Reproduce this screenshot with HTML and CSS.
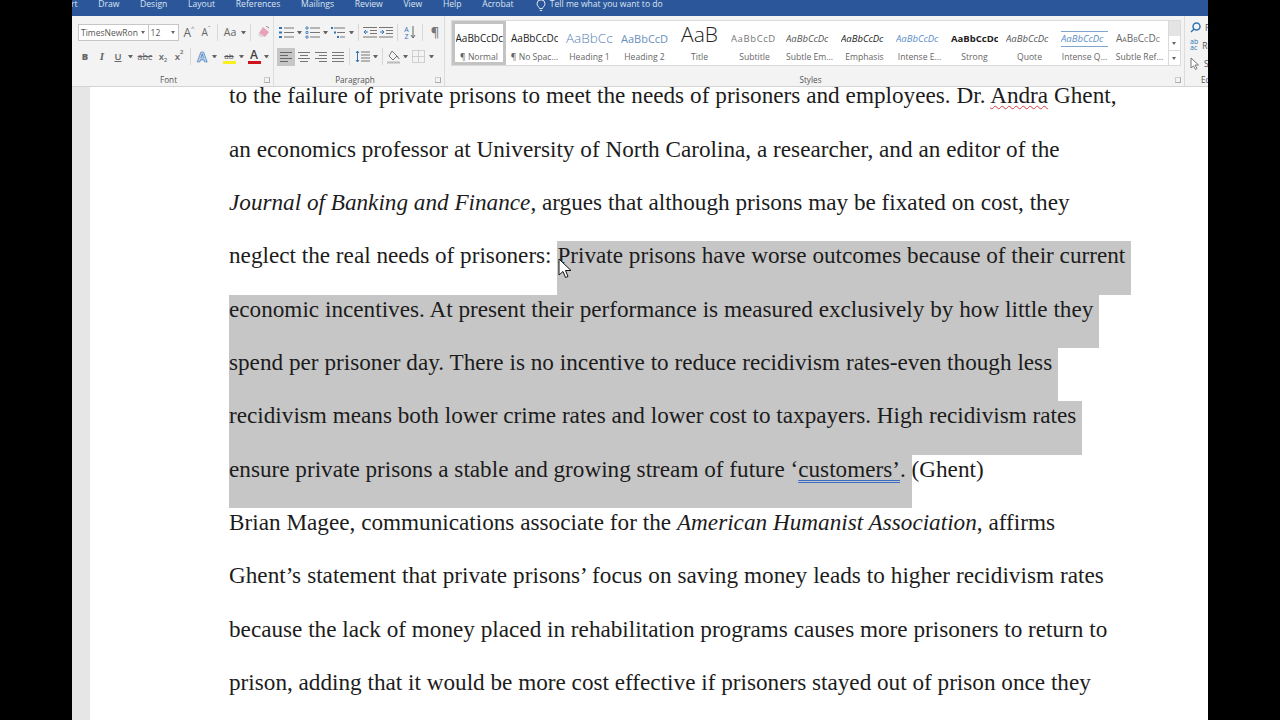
FILE: index.html
```html
<!DOCTYPE html>
<html lang="en">
<head>
<meta charset="utf-8">
<title>Document - Word</title>
<link rel="stylesheet" href="styles.css">
</head>
<body>
<div class="app">
  <nav class="tabs">
    <span class="tab-cut">rt</span><span>Draw</span><span>Design</span><span>Layout</span><span>References</span><span>Mailings</span><span>Review</span><span>View</span><span>Help</span><span>Acrobat</span>
    <span class="tell">
      <svg width="10" height="12" viewBox="0 0 10 12" fill="none" stroke="#dfe7f3" stroke-width="1"><path d="M3.5 8.5C3 6.5 1 6 1 3.8a4 4 0 0 1 8 0C9 6 7 6.5 6.500 8.500zM3.800 10.500h2.400"/></svg>
      Tell me what you want to do
    </span>
  </nav>

  <section class="ribbon">
    <div class="group g-font">
      <div class="row">
        <div class="combo c-name">TimesNewRon<i class="caret"></i></div>
        <div class="combo c-size">12<i class="caret"></i></div>
        <span class="ic w16 m2 glyph big">A<sup>^</sup></span>
        <span class="ic w16 m1 glyph mid">A<sup>ˇ</sup></span>
        <b class="sep"></b>
        <span class="ic w18 glyph aa">Aa</span><i class="caret solo"></i>
        <b class="sep"></b>
        <span class="ic w18 m1"><svg width="15" height="13" viewBox="0 0 15 13"><path d="M6 1l6 5-4 5-6-4z" fill="#e9a0b8"/><path d="M2 7l5 4H3.500L1 8.500z" fill="#d8d8d8"/><path d="M9 0l3 2" stroke="#888" fill="none"/></svg></span>
      </div>
      <div class="row r2">
        <span class="ic w14 glyph fmt bold">B</span>
        <span class="ic w16 m2 glyph fmt ital">I</span>
        <span class="ic w16 glyph fmt under">U</span><i class="caret solo"></i>
        <span class="ic w18 m2 glyph fmt strike">abc</span>
        <span class="ic w16 m1 glyph fmt">x<sub>2</sub></span>
        <span class="ic w16 glyph fmt">x<sup>2</sup></span>
        <b class="sep"></b>
        <span class="ic w16 glyph effect">A</span><i class="caret solo"></i>
        <span class="ic w16 m3 stack"><span class="hl-t">ab</span><em class="bar yellow"></em></span><i class="caret solo"></i>
        <span class="ic w16 m1 stack"><span class="red-t">A</span><em class="bar red"></em></span><i class="caret solo"></i>
      </div>
      <div class="glabel">Font<i class="launcher"></i></div>
    </div>

    <div class="group g-para">
      <div class="row">
        <span class="ic w18"><svg width="15" height="13" viewBox="0 0 15 13" stroke="#777"><path d="M5 2h10M5 6.500h10M5 11h10"/><path d="M0 2h3M0 6.500h3M0 11h3" stroke="#2f75b5" stroke-width="2"/></svg></span><i class="caret solo"></i>
        <span class="ic w18"><svg width="15" height="13" viewBox="0 0 15 13" stroke="#777"><path d="M5 2h10M5 6.500h10M5 11h10"/><path d="M1 1h2v2H1zM1 5.500h2v2H1zM1 10h2v2H1z" stroke="#2f75b5" stroke-width=".8" fill="none"/></svg></span><i class="caret solo"></i>
        <span class="ic w18"><svg width="15" height="13" viewBox="0 0 15 13" stroke="#777"><path d="M3 2h11M6 6.500h8M9 11h5"/><path d="M0 2h2M3 6.500h2M6 11h2" stroke="#2f75b5" stroke-width="2"/></svg></span><i class="caret solo"></i>
        <b class="sep"></b>
        <span class="ic w16"><svg width="14" height="11" viewBox="0 0 14 11" stroke="#777"><path d="M0 .5h14M7 3.500h7M7 6.500h7M0 10h14"/><path d="M5 5H1m2-2L1 5l2 2" stroke="#2f75b5" fill="none"/></svg></span>
        <span class="ic w16"><svg width="14" height="11" viewBox="0 0 14 11" stroke="#777"><path d="M0 .5h14M7 3.500h7M7 6.500h7M0 10h14"/><path d="M1 5h4M3 3l2 2-2 2" stroke="#2f75b5" fill="none"/></svg></span>
        <b class="sep"></b>
        <span class="ic w18 sort"><span class="sort-t">A<br>Z</span><svg width="6" height="13" viewBox="0 0 6 13" fill="none" stroke="#666"><path d="M3 0v12M1 9l2 3 2-3"/></svg></span>
        <b class="sep"></b>
        <span class="ic w18 glyph pil">¶</span>
      </div>
      <div class="row r2">
        <span class="ic w18 on"><svg width="12" height="10" viewBox="0 0 12 10" stroke="#666"><path d="M0 .5h12M0 3.500h8M0 6.500h12M0 9.500h8"/></svg></span>
        <span class="ic w17"><svg width="12" height="10" viewBox="0 0 12 10" stroke="#777"><path d="M0 .5h12M2 3.500h8M0 6.500h12M2 9.500h8"/></svg></span>
        <span class="ic w17"><svg width="12" height="10" viewBox="0 0 12 10" stroke="#777"><path d="M0 .5h12M4 3.500h8M0 6.500h12M4 9.500h8"/></svg></span>
        <span class="ic w17"><svg width="12" height="10" viewBox="0 0 12 10" stroke="#777"><path d="M0 .5h12M0 3.500h12M0 6.500h12M0 9.500h12"/></svg></span>
        <b class="sep"></b>
        <span class="ic w18"><svg width="15" height="13" viewBox="0 0 15 13" stroke="#777" fill="none"><path d="M6 2h9M6 5h9M6 8h9M6 11h9"/><path d="M2.500 1v11M1 3l1.500-2L4 3M1 10l1.500 2L4 10" stroke="#2f75b5"/></svg></span><i class="caret solo"></i>
        <b class="sep"></b>
        <span class="ic w15"><svg width="15" height="14" viewBox="0 0 15 14" fill="none" stroke="#777"><path d="M6 1l5 5-4 4-4-4z"/><path d="M11 6c1 2 2 2 2 3" stroke="#555"/><path d="M1 12.500h13" stroke="#bbb" stroke-width="2"/></svg></span><i class="caret solo"></i>
        <span class="ic w18"><svg width="13" height="13" viewBox="0 0 13 13" fill="none" stroke="#aaa" stroke-dasharray="1 1"><path d="M.5.500h12v12H.5zM6.500.500v12M.5 6.500h12"/></svg></span><i class="caret solo"></i>
      </div>
      <div class="glabel">Paragraph<i class="launcher"></i></div>
    </div>

    <div class="group g-styles">
      <div class="gallery">
        <div class="style selected"><span class="sample s-normal">AaBbCcDc</span><span class="sname">¶ Normal</span></div>
        <div class="style"><span class="sample s-normal">AaBbCcDc</span><span class="sname">¶ No Spac...</span></div>
        <div class="style"><span class="sample s-h1">AaBbCc</span><span class="sname">Heading 1</span></div>
        <div class="style"><span class="sample s-h2">AaBbCcD</span><span class="sname">Heading 2</span></div>
        <div class="style"><span class="sample s-title">AaB</span><span class="sname">Title</span></div>
        <div class="style"><span class="sample s-sub">AaBbCcD</span><span class="sname">Subtitle</span></div>
        <div class="style"><span class="sample s-em">AaBbCcDc</span><span class="sname">Subtle Em...</span></div>
        <div class="style"><span class="sample s-em dark">AaBbCcDc</span><span class="sname">Emphasis</span></div>
        <div class="style"><span class="sample s-em blue">AaBbCcDc</span><span class="sname">Intense E...</span></div>
        <div class="style"><span class="sample s-strong">AaBbCcDc</span><span class="sname">Strong</span></div>
        <div class="style"><span class="sample s-em">AaBbCcDc</span><span class="sname">Quote</span></div>
        <div class="style"><span class="sample s-em blue ruled">AaBbCcDc</span><span class="sname">Intense Q...</span></div>
        <div class="style"><span class="sample s-ref">AaBbCcDc</span><span class="sname">Subtle Ref...</span></div>
        <div class="scroller"><i class="sc up"></i><i class="sc mid"></i><i class="sc low"></i></div>
      </div>
      <div class="glabel">Styles<i class="launcher"></i></div>
    </div>

    <div class="group g-edit">
      <div class="edit-row"><svg width="11" height="11" viewBox="0 0 11 11" fill="none" stroke="#2f75b5" stroke-width="1.500"><circle cx="6.500" cy="4.500" r="3.500"/><path d="M4 7L1 10"/></svg><span>Find</span></div>
      <div class="edit-row"><span class="abc">ab<br>ac</span><span>Replace</span></div>
      <div class="edit-row"><svg width="10" height="13" viewBox="0 0 10 13" fill="#fff" stroke="#777"><path d="M1 1v10l2.500-2 2 3.500 1.500-1-2-3.500h3.500z"/></svg><span>Select</span></div>
      <div class="glabel left">Editing</div>
    </div>
  </section>

  <main class="doc">
    <article class="page">
      <div class="text">
        <p class="line ws-m">to the failure of private prisons to meet the needs of prisoners and employees. Dr. <span class="spell">Andra</span> Ghent,</p>
        <p class="line ws-s">an economics professor at University of North Carolina, a researcher, and an editor of the</p>
        <p class="line"><em>Journal of Banking and Finance</em>, argues that although prisons may be fixated on cost, they</p>
        <p class="line">neglect the real needs of prisoners: <span class="sel">Private prisons have worse outcomes because of their current </span></p>
        <p class="line ws-s"><span class="sel">economic incentives. At present their performance is measured exclusively by how little they </span></p>
        <p class="line ws-s"><span class="sel">spend per prisoner day. There is no incentive to reduce recidivism rates-even though less </span></p>
        <p class="line"><span class="sel">recidivism means both lower crime rates and lower cost to taxpayers. High recidivism rates </span></p>
        <p class="line"><span class="sel">ensure private prisons a stable and growing stream of future ‘<span class="gram">customers’</span>. </span>(Ghent)</p>
        <p class="line ws-s">Brian Magee, communications associate for the <em>American Humanist Association</em>, affirms</p>
        <p class="line ws-l">Ghent’s statement that private prisons’ focus on saving money leads to higher recidivism rates</p>
        <p class="line">because the lack of money placed in rehabilitation programs causes more prisoners to return to</p>
        <p class="line">prison, adding that it would be more cost effective if prisoners stayed out of prison once they</p>
      </div>
      <svg class="pointer" width="14" height="22" viewBox="0 0 14 22"><path d="M1 1v16l4-3.500 2.500 6 2.500-1-2.500-6H13z" fill="#fff" stroke="#111"/></svg>
    </article>
  </main>
</div>
</body>
</html>
```
FILE: styles.css
```css
* { box-sizing: border-box; }
html, body { margin: 0; height: 100%; background: #000; overflow: hidden; }
body { padding: 0 72px; font-family: "Open Sans", "Noto Sans", sans-serif; }
.app { width: 1136px; height: 720px; display: flex; flex-direction: column; overflow: hidden; background: #fff; }

.tabs { height: 16px; flex: none; background: #2b579a; color: #dbe4f1; font-size: 8.600px; line-height: 9px; display: flex; gap: 20.700px; align-items: flex-start; white-space: nowrap; overflow: hidden; }
.tab-cut { width: 5.500px; overflow: hidden; direction: rtl; }
.tell { display: flex; gap: 4px; margin-left: 1.500px; align-items: flex-start; }
.tell svg { flex: none; }

.ribbon { height: 71px; flex: none; background: #f3f3f3; border-bottom: 1px solid #d4d4d4; display: flex; color: #666; overflow: hidden; }
.group { position: relative; flex: none; border-right: 1px solid #dcdcdc; padding-top: 8px; }
.g-font { width: 202px; padding-left: 6px; }
.g-para { width: 171px; padding-left: 3px; }
.g-styles { width: 740px; padding: 4px 0 0 6px; }
.g-edit { width: 23px; border: 0; padding: 2px 0 0 5px; }

.row { display: flex; align-items: center; height: 17px; }
.r2 { margin-top: 7px; }
.glabel { position: absolute; left: 0; right: 0; bottom: 0; height: 12px; padding-right: 8px; font-size: 8.200px; line-height: 11px; text-align: center; color: #555; white-space: nowrap; }
.left { text-align: left; padding-left: 16px; padding-right: 0; }
.launcher { position: absolute; right: 3px; top: 3px; width: 6px; height: 6px; border: 1px solid #aaa; border-top-color: #ccc; border-left-color: #ccc; }

.combo { height: 17px; background: #fff; border: 1px solid #c6c6c6; font-size: 8.500px; line-height: 15px; padding-left: 2px; color: #555; position: relative; white-space: nowrap; overflow: hidden; }
.c-name { width: 72px; }
.c-size { width: 32px; margin-left: -1px; }
.caret { display: block; width: 0; height: 0; border: 2.500px solid transparent; border-top: 3px solid #666; border-bottom: 0; }
.combo .caret { position: absolute; right: 3px; top: 6px; }
.caret.solo { flex: none; width: 5px; margin: 0 1.500px; }

.ic { display: flex; align-items: center; justify-content: center; flex: none; height: 17px; white-space: nowrap; }
.w14 { width: 14px; } .w15 { width: 15px; } .w16 { width: 16px; } .w17 { width: 17px; } .w18 { width: 18px; }
.m1 { margin-left: 1px; } .m2 { margin-left: 2px; } .m3 { margin-left: 3px; }
.sep { flex: none; width: 1px; height: 17px; background: #d8d8d8; margin: 0 3px; }

.glyph { color: #666; font-size: 10px; line-height: 17px; }
.glyph sup { font-size: 6px; line-height: 6px; align-self: flex-start; margin-top: 1px; }
.glyph sub { font-size: 5.500px; line-height: 6px; align-self: flex-end; margin-bottom: 2px; }
.big { font-size: 12px; } .mid { font-size: 10px; }
.aa { font-size: 10.500px; }
.fmt { font-weight: 600; font-size: 9.500px; }
.bold { font-weight: 800; }
.ital { font-style: italic; font-family: "Liberation Serif", serif; font-size: 11px; }
.under { text-decoration: underline; }
.strike { text-decoration: line-through; font-weight: 400; font-size: 9px; }
.effect { font-size: 14px; font-weight: 700; color: #cfe0f3; -webkit-text-stroke: .7px #2f75b5; }
.pil { font-size: 13px; font-weight: 600; color: #777; }
.stack { flex-direction: column; line-height: 9px; }
.hl-t { font-size: 8px; color: #555; text-decoration: line-through; line-height: 11px; }
.red-t { font-size: 12px; font-weight: 600; color: #444; line-height: 12px; }
.bar { display: block; width: 13px; height: 3px; flex: none; }
.yellow { background: #f7f01d; } .red { background: #d0121b; }
.sort { gap: 1px; }
.sort-t { font-size: 7px; line-height: 7px; color: #2f75b5; text-align: center; }
.on { background: #c6c6c6; height: 18px; }

.gallery { width: 730px; height: 46px; background: #fff; border: 1px solid #dadada; display: flex; }
.style { flex: none; width: 55px; height: 44px; display: flex; flex-direction: column; align-items: center; overflow: hidden; padding-top: 6px; }
.selected { border: 3px solid #c3c3c3; padding-top: 0; width: 54px; margin-right: 1px; }
.sample { height: 23px; line-height: 23px; width: 47px; flex: none; overflow: hidden; white-space: nowrap; text-align: center; color: #222; font-size: 10px; display: block; }
.sname { font-size: 8.600px; line-height: 12px; margin-top: 1px; color: #666; white-space: nowrap; }
.selected .sample { line-height: 28px; }
.selected .sname { margin-top: 4px; }
.s-normal { font-weight: 500; }
.s-h1 { font-size: 13.500px; color: #5b83b5; font-weight: 300; text-align: left; }
.s-h2 { font-size: 11px; color: #6a8fbd; text-align: left; }
.s-title { font-size: 21px; font-weight: 300; color: #222; line-height: 15px; }
.s-sub { font-size: 9.500px; letter-spacing: .6px; color: #777; text-align: left; }
.s-em { font-style: italic; font-size: 9.500px; color: #555; text-align: left; }
.dark { color: #222; }
.blue { color: #5b8fc8; }
.ruled { border-top: 1px solid #7fa6d0; border-bottom: 1px solid #7fa6d0; height: 16px; line-height: 14px; margin: 4px 0 3px; }
.s-strong { font-weight: 700; font-size: 9.500px; color: #222; text-align: left; }
.s-ref { font-variant: small-caps; color: #666; font-size: 10px; text-align: left; }
.scroller { width: 12px; flex: none; margin-left: 1px; display: flex; flex-direction: column; border-left: 1px solid #dadada; }
.sc { display: block; height: 14.700px; background: #fff; position: relative; }
.up { background: #e4e4e4; }
.sc.mid::after, .sc.low::after { content: ""; position: absolute; left: 3px; top: 6px; border: 2.500px solid transparent; border-top: 3px solid #666; border-bottom: 0; }
.sc.low { border-top: 1px solid #dadada; }

.edit-row { display: flex; align-items: center; gap: 4px; height: 18px; font-size: 8.500px; color: #555; white-space: nowrap; }
.edit-row svg, .abc { flex: none; }
.abc { font-size: 7px; line-height: 6px; color: #2f75b5; }

.doc { flex: 1; min-height: 0; background: #e6e6e6; padding-left: 18px; overflow: hidden; }
.page { position: relative; height: 100%; background: #fff; padding-left: 139px; overflow: hidden; }
.text { margin-top: -5.600px; font-family: "Liberation Serif", "Times New Roman", serif; font-size: 23.200px; color: #1c1c1c; }
.line { margin: 0; height: 53.330px; line-height: 28px; white-space: pre; }
.ws-s { word-spacing: .07px; } .ws-m { word-spacing: .13px; } .ws-l { word-spacing: .2px; }
.sel { display: inline-block; height: 53.330px; background: #c6c6c6; vertical-align: top; }
.spell { text-decoration: underline wavy #d83b3b 1px; text-underline-offset: 2px; }
.gram { text-decoration: underline double #3a6cc4 1px; text-underline-offset: 3px; }
.pointer { position: absolute; left: 468px; top: 171px; }
```
